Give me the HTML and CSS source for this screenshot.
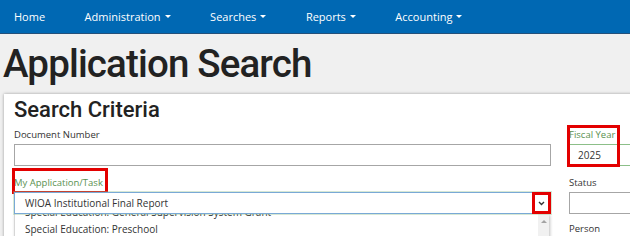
FILE: index.html
```html
<!DOCTYPE html>
<html lang="en">
<head>
<meta charset="utf-8">
<title>Application Search</title>
<link rel="stylesheet" href="styles.css">
</head>
<body>
<nav class="topnav">
  <a class="nav-item">Home</a>
  <a class="nav-item">Administration <span class="caret"></span></a>
  <a class="nav-item">Searches <span class="caret"></span></a>
  <a class="nav-item">Reports <span class="caret"></span></a>
  <a class="nav-item">Accounting <span class="caret"></span></a>
</nav>
<h1 class="page-title">Application Search</h1>
<section class="card">
  <h2 class="card-title">Search Criteria</h2>
  <div class="cols">
    <div class="col-main">
      <div class="field">
        <label class="label">Document Number</label>
        <div class="input"></div>
      </div>
      <div class="field field-gap">
        <div class="label-row"><span class="label label-valid label-hl">My Application/Task</span></div>
        <div class="select">
          <span class="select-text">WIOA Institutional Final Report</span>
          <span class="select-btn"><svg width="7" height="5" viewBox="0 0 7 5"><polyline points="1,1 3.5,3.5 6,1" fill="none" stroke="#333" stroke-width="1.4"/></svg></span>
        </div>
        <div class="dropdown">
          <div class="dropdown-list">
            <div class="opt opt-clipped">Special Education: General Supervision System Grant</div>
            <div class="opt">Special Education: Preschool</div>
          </div>
          <div class="scrollbar"><span class="sb-up"></span></div>
        </div>
      </div>
    </div>
    <div class="col-side">
      <div class="field field-fy">
        <label class="label label-valid">Fiscal Year</label>
        <div class="input input-valid">2025</div>
        <span class="hl-box"></span>
      </div>
      <div class="field field-gap">
        <div class="label-row"><span class="label">Status</span></div>
        <div class="input"></div>
      </div>
      <div class="field field-person">
        <label class="label">Person</label>
      </div>
    </div>
  </div>
</section>
</body>
</html>
```
FILE: styles.css
```css
html, body {
  margin: 0;
  padding: 0;
  overflow: hidden;
}
body {
  background: #f0f0f0;
  font-family: "Open Sans", "Liberation Sans", sans-serif;
  color: #333;
  width: 630px;
  height: 236px;
}
.topnav {
  height: 33px;
  background: #0068b3;
  border-bottom: 1px solid #24507a;
  display: flex;
  align-items: center;
  padding-left: 14px;
  gap: 39.5px;
}
.nav-item {
  color: #fff;
  font-size: 11px;
  line-height: 14px;
  white-space: nowrap;
  display: flex;
  align-items: center;
}
.caret {
  display: inline-block;
  width: 0;
  height: 0;
  margin-left: 4px;
  border-top: 3px solid #fff;
  border-left: 3px solid transparent;
  border-right: 3px solid transparent;
}
.page-title {
  margin: 8px 0 8px 3px;
  font-family: Roboto, "Liberation Sans", sans-serif;
  font-weight: 500;
  font-size: 38.5px;
  line-height: 44px;
  color: #222;
  letter-spacing: -0.85px;
}
.card {
  margin-left: 4px;
  width: 700px;
  height: 200px;
  background: #fff;
  box-shadow: 0 0 3px rgba(0, 0, 0, 0.35);
  padding: 3px 0 0 10px;
}
.card-title {
  margin: 0 0 5px 0;
  font-family: Roboto, "Liberation Sans", sans-serif;
  font-weight: 500;
  font-size: 22px;
  line-height: 26px;
  color: #222;
}
.cols {
  display: flex;
  gap: 18px;
}
.col-main {
  width: 537px;
  display: flex;
  flex-direction: column;
}
.col-side {
  flex: 1;
  display: flex;
  flex-direction: column;
}
.field {
  display: flex;
  flex-direction: column;
}
.field-gap {
  margin-top: 4px;
}
.label {
  font-size: 9.5px;
  line-height: 14px;
  color: #333;
  display: block;
  margin-bottom: 2px;
}
.label-row {
  height: 22px;
  display: flex;
  align-items: flex-start;
}
.label-row .label {
  margin: 0;
  padding: 3px 3px 0 0;
  line-height: 19px;
  height: 19px;
}
.label-valid {
  color: #5a9150;
}
.label-hl {
  outline: 3px solid #e30000;
  outline-offset: -1px;
}
.input {
  height: 22px;
  box-sizing: border-box;
  border: 1px solid #a6a6a6;
  background: #fff;
  font-size: 10px;
  line-height: 20px;
  padding-left: 8px;
  color: #333;
}
.input-valid {
  border-color: #8cbf88;
}
.field-fy {
  position: relative;
}
.hl-box {
  position: absolute;
  left: -2px;
  top: -3px;
  width: 53px;
  height: 42px;
  border: 3px solid #e30000;
  box-sizing: border-box;
}
.field-person {
  margin-top: 8px;
}
.select {
  height: 22px;
  box-sizing: border-box;
  border: 1px solid #79a9d6;
  box-shadow: 0 0 0 1px rgba(140, 190, 136, 0.35);
  display: flex;
  align-items: stretch;
  justify-content: space-between;
  background: #fff;
  position: relative;
  z-index: 1;
}
.select-text {
  font-size: 10px;
  line-height: 20px;
  padding-left: 10px;
  color: #333;
}
.select-btn {
  width: 17px;
  display: flex;
  align-items: center;
  justify-content: center;
  outline: 3px solid #e30000;
  outline-offset: -2px;
}
.dropdown {
  height: 40px;
  width: 534px;
  display: flex;
  border-left: 1px solid #d6d6d6;
  box-shadow: 1px 1px 3px rgba(0, 0, 0, 0.25);
  background: #fff;
  overflow: hidden;
}
.dropdown-list {
  flex: 1;
  overflow: hidden;
}
.opt {
  font-size: 10px;
  line-height: 17px;
  padding-left: 10px;
  color: #333;
  white-space: nowrap;
}
.opt-clipped {
  margin-top: -10.5px;
}
.scrollbar {
  width: 11px;
  background: #f1f1f1;
  display: flex;
  justify-content: center;
  padding-top: 6px;
}
.sb-up {
  width: 0;
  height: 0;
  border-bottom: 3px solid #a3a3a3;
  border-left: 3px solid transparent;
  border-right: 3px solid transparent;
}
```
